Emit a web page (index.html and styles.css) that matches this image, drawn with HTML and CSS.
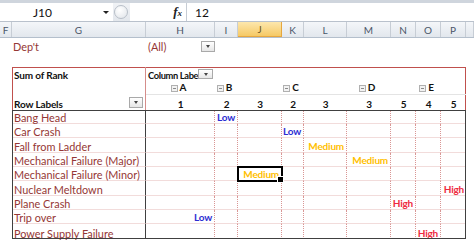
FILE: index.html
```html
<!DOCTYPE html>
<html>
<head>
<meta charset="utf-8">
<link rel="stylesheet" href="styles.css">
</head>
<body>
<div class="app">
  <div class="fbar">
    <div class="namebox"><span class="nb-text">J10</span><span class="nb-arrow"></span></div>
    <div class="knob"><span class="knob-dot"></span></div>
    <div class="fx-area"><span class="fx">f<span class="fx-x">x</span></span></div>
    <div class="formula">12</div>
  </div>
  <div class="colheads">
    <div class="ch">F</div><div class="ch">G</div><div class="ch">H</div><div class="ch">I</div>
    <div class="ch ch-sel">J</div><div class="ch">K</div><div class="ch">L</div><div class="ch">M</div>
    <div class="ch">N</div><div class="ch">O</div><div class="ch">P</div><div class="ch"></div>
  </div>
  <div class="sheet">
    <div class="cell lbl dept">Dep't</div>
    <div class="cell lbl all"><span class="all-text">(All)</span><span class="dd"><span class="tri"></span></span></div>

    <div class="pv-head">
      <div class="hc hc-lbl bold">Sum of Rank</div>
      <div class="hc hc-collab bold"><span class="clip">Column Labe</span><span class="dd"><span class="tri"></span></span></div>
      <div class="hc empty"></div><div class="hc empty"></div><div class="hc empty"></div><div class="hc empty"></div>
      <div class="hc empty"></div><div class="hc empty"></div><div class="hc empty"></div><div class="hc empty"></div>

      <div class="hc hc-lbl"></div>
      <div class="hc grp bold"><span class="pm"></span>A</div>
      <div class="hc grp bold"><span class="pm"></span>B</div>
      <div class="hc grp"></div>
      <div class="hc grp bold"><span class="pm"></span>C</div>
      <div class="hc grp"></div>
      <div class="hc grp bold"><span class="pm"></span>D</div>
      <div class="hc grp"></div>
      <div class="hc grp bold"><span class="pm"></span>E</div>
      <div class="hc grp"></div>

      <div class="hc hc-lbl hc-rl bold"><span class="clip">Row Labels</span><span class="dd"><span class="tri"></span></span></div>
      <div class="hc num bold">1</div><div class="hc num bold">2</div><div class="hc num bold">3</div>
      <div class="hc num bold">2</div><div class="hc num bold">3</div><div class="hc num bold">3</div>
      <div class="hc num bold">5</div><div class="hc num bold">4</div><div class="hc num bold">5</div>
    </div>

    <div class="pv-data">
      <div class="dl">Bang Head</div>
      <div class="dv"></div><div class="dv low">Low</div><div class="dv"></div><div class="dv"></div><div class="dv"></div><div class="dv"></div><div class="dv"></div><div class="dv"></div><div class="dv last"></div>

      <div class="dl">Car Crash</div>
      <div class="dv"></div><div class="dv"></div><div class="dv"></div><div class="dv low">Low</div><div class="dv"></div><div class="dv"></div><div class="dv"></div><div class="dv"></div><div class="dv last"></div>

      <div class="dl">Fall from Ladder</div>
      <div class="dv"></div><div class="dv"></div><div class="dv"></div><div class="dv"></div><div class="dv med">Medium</div><div class="dv"></div><div class="dv"></div><div class="dv"></div><div class="dv last"></div>

      <div class="dl">Mechanical Failure (Major)</div>
      <div class="dv"></div><div class="dv"></div><div class="dv"></div><div class="dv"></div><div class="dv"></div><div class="dv med">Medium</div><div class="dv"></div><div class="dv"></div><div class="dv last"></div>

      <div class="dl">Mechanical Failure (Minor)</div>
      <div class="dv"></div><div class="dv"></div><div class="dv med sel">Medium<span class="handle"></span></div><div class="dv"></div><div class="dv"></div><div class="dv"></div><div class="dv"></div><div class="dv"></div><div class="dv last"></div>

      <div class="dl">Nuclear Meltdown</div>
      <div class="dv"></div><div class="dv"></div><div class="dv"></div><div class="dv"></div><div class="dv"></div><div class="dv"></div><div class="dv"></div><div class="dv"></div><div class="dv last high">High</div>

      <div class="dl">Plane Crash</div>
      <div class="dv"></div><div class="dv"></div><div class="dv"></div><div class="dv"></div><div class="dv"></div><div class="dv"></div><div class="dv high">High</div><div class="dv"></div><div class="dv last"></div>

      <div class="dl">Trip over</div>
      <div class="dv low">Low</div><div class="dv"></div><div class="dv"></div><div class="dv"></div><div class="dv"></div><div class="dv"></div><div class="dv"></div><div class="dv"></div><div class="dv last"></div>

      <div class="dl bottom">Power Supply Failure</div>
      <div class="dv bottom"></div><div class="dv bottom"></div><div class="dv bottom"></div><div class="dv bottom"></div><div class="dv bottom"></div><div class="dv bottom"></div><div class="dv bottom"></div><div class="dv bottom high">High</div><div class="dv bottom last"></div>
    </div>
  </div>
</div>
</body>
</html>
```

FILE: styles.css
```css
* { box-sizing: border-box; }
html, body { margin: 0; padding: 0; background: #fff; }
body { width: 474px; height: 246px; overflow: hidden; font-family: Lato, "Open Sans", sans-serif; }
.app { width: 474px; height: 246px; overflow: hidden; display: flex; flex-direction: column; }

/* formula bar */
.fbar {
  height: 22px; flex: none; display: flex;
  border-top: 3px solid #cfd5dd; border-bottom: 1px solid #b9c1cc;
  background: #fff;
}
.namebox {
  width: 113px; display: flex; align-items: center;
  font-size: 12px; color: #111;
}
.nb-text { margin-left: 33px; flex: 1; }
.nb-arrow {
  width: 0; height: 0; margin-right: 4px;
  border-left: 3px solid transparent; border-right: 3px solid transparent; border-top: 3px solid #222;
}
.knob {
  width: 17px; display: flex; align-items: center; justify-content: flex-start;
  background: linear-gradient(#f0f2f5, #e3e7ec);
}
.knob-dot {
  width: 14px; height: 14px; border-radius: 50%; margin-left: 1px;
  border: 1px solid #b8bfc8; background: radial-gradient(circle at 40% 35%, #ffffff, #dfe3e8);
}
.fx-area {
  width: 57px; display: flex; align-items: center; justify-content: flex-end;
  border-right: 1px solid #c6ccd4; padding-right: 4px;
}
.fx { font-family: "Liberation Serif", serif; font-style: italic; font-weight: bold; font-size: 13px; color: #222; }
.fx-x { font-size: 9px; }
.formula { flex: 1; display: flex; align-items: center; padding-left: 8px; font-size: 12px; color: #111; }

/* column headers */
.colheads {
  height: 16px; flex: none; display: grid;
  grid-template-columns: 12px 134px 69px 23px 44px 22px 43px 44px 25px 25px 25px 8px;
  background: linear-gradient(#f4f6f9, #e2e7ed);
  border-bottom: 1px solid #b4bfcc;
}
.ch {
  display: flex; align-items: center; justify-content: center;
  font-size: 10px; color: #4a5568; border-right: 1px solid #c7cdd5;
}
.ch-sel {
  background: linear-gradient(#fde7ad, #f6c965);
  border-right: 1px solid #e6a73e; border-bottom: 1px solid #e6a73e;
  color: #6a5420;
}

/* sheet */
.sheet {
  display: grid;
  grid-template-columns: 12px 134px 69px 23px 44px 22px 43px 44px 25px 25px 25px 8px;
  grid-template-rows: repeat(15, 14.333px);
  font-size: 10.9px; line-height: 11px;
}
.cell { display: flex; align-items: flex-end; white-space: nowrap; }
.lbl { color: #953735; }
.dept { grid-column: 2; grid-row: 1; padding-left: 1px; }
.all { grid-column: 3; grid-row: 1; padding-left: 2px; }
.all-text { flex: 1; }
.all .dd { align-self: center; margin-right: 0; margin-top: 2px; }
.dd {
  width: 14px; height: 11px; flex: none; margin-right: 1px;
  border: 1px solid #a9a9a9; background: linear-gradient(#ffffff, #e6e6e6);
  display: flex; align-items: center; justify-content: center;
}
.tri {
  width: 0; height: 0;
  border-left: 2.5px solid transparent; border-right: 2.5px solid transparent; border-top: 3px solid #444;
}
.bold { font-weight: bold; color: #111; font-size: 10px; letter-spacing: -0.15px; }

.pv-head {
  grid-column: 2 / 12; grid-row: 3 / 6;
  display: grid;
  grid-template-columns: 134px 69px 23px 44px 22px 43px 44px 25px 25px 25px;
  grid-template-rows: repeat(3, 14.333px);
  box-shadow: inset 1px 1px 0 #c0504d, inset -1px 0 0 #c0504d;
}
.hc { display: flex; align-items: flex-end; white-space: nowrap; overflow: hidden; }
.hc-lbl { border-right: 1px solid #d58d8b; padding-left: 2px; }
.hc-collab { padding-left: 2px; grid-column: 2; overflow: visible; }
.hc-collab .clip { flex: 1; font-size: 9.3px; letter-spacing: -0.35px; }
.hc-collab .dd { align-self: center; margin-right: 3px; margin-top: 1px; height: 10px; width: 15px; }
.hc-rl .clip { flex: 1; overflow: hidden; }
.hc-rl .dd { margin-right: 2px; align-self: center; margin-top: 1px; }
.grp { justify-content: center; padding-right: 4px; border-bottom: 1px solid #e4e4e4; overflow: visible; padding-bottom: 1px; }
.pm {
  width: 7px; height: 7px; margin-right: 2px; margin-bottom: 1px; flex: none;
  border: 1px solid #b0b0b0; background: #f2f2f2; position: relative;
}
.pm::after {
  content: ""; position: absolute; left: 1px; top: 2px; width: 3px; height: 1px; background: #8a8a8a;
}
.num { justify-content: center; }

.pv-data {
  grid-column: 2 / 12; grid-row: 6 / 15;
  display: grid;
  grid-template-columns: 134px 69px 23px 44px 22px 43px 44px 25px 25px 25px;
  grid-template-rows: repeat(9, 14.333px);
  outline: 1px solid #404040; outline-offset: -1px;
}
.dl {
  color: #953735; padding-left: 2px; display: flex; align-items: flex-end; white-space: nowrap;
  border-right: 1px solid #404040; border-bottom: 1px solid #f2dcdb;
}
.dv {
  display: flex; align-items: flex-end; justify-content: flex-end; padding-right: 2px;
  white-space: nowrap; font-weight: bold; font-size: 10px; letter-spacing: -0.2px;
  border-right: 1px dotted #d99694; border-bottom: 1px solid #f2dcdb;
}
.dv.last { border-right: none; }
.bottom { border-bottom: none; }
.low { color: #2d2dd2; }
.med { color: #ffc000; }
.high { color: #ee2a40; }
.sel { outline: 2px solid #000; outline-offset: -1px; position: relative; }
.handle {
  position: absolute; right: -3px; bottom: -3px; width: 5px; height: 5px;
  background: #000; border: 1px solid #fff; box-sizing: content-box;
}
```
